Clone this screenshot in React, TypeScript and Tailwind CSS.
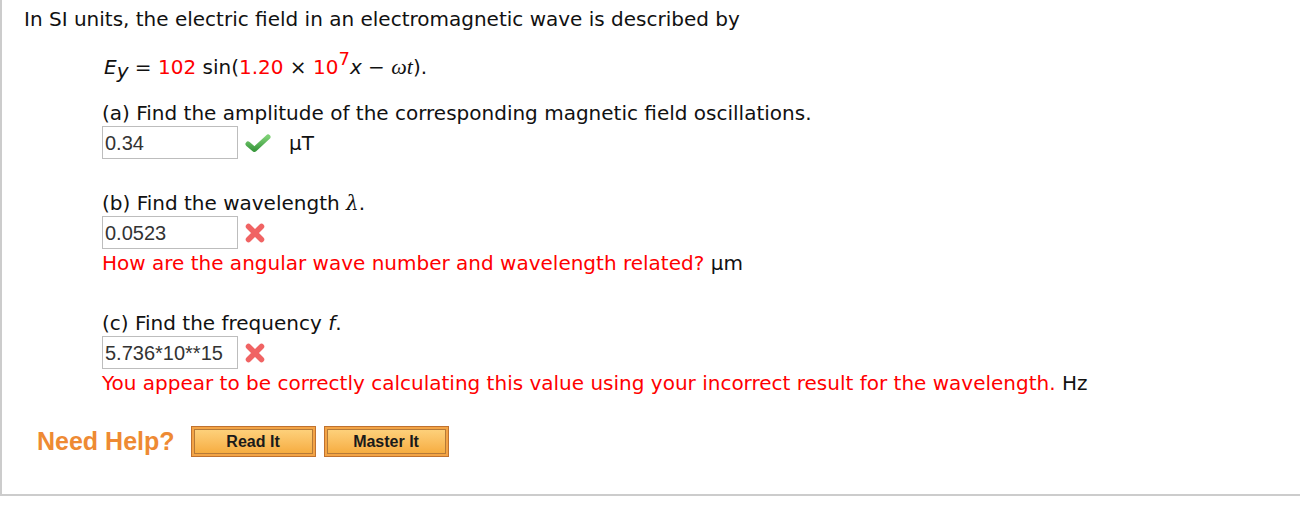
import React from 'react';

const Check = () => (
  <svg width="26" height="20" viewBox="0 0 26 20" className="shrink-0">
    <defs>
      <linearGradient id="chk" x1="0" y1="0" x2="0" y2="1">
        <stop offset="0" stopColor="#7ccf74" />
        <stop offset="1" stopColor="#3c9a3f" />
      </linearGradient>
    </defs>
    <path d="M3 11 L9.5 16.5 L23 4" fill="none" stroke="url(#chk)" strokeWidth="5" strokeLinecap="round" strokeLinejoin="round" />
  </svg>
);

const Cross = () => (
  <svg width="22" height="22" viewBox="0 0 22 22" className="shrink-0">
    <path d="M4.5 4.5 L17.5 17.5 M17.5 4.5 L4.5 17.5" fill="none" stroke="#f06363" strokeWidth="5.5" strokeLinecap="round" />
  </svg>
);

const Answer = ({ value }: { value: string }) => (
  <div className="w-[136px] h-[33px] border border-[#bdbdbd] bg-white flex items-center px-[2px] text-[20px] text-[#333] [font-family:'Liberation_Sans',Arial,sans-serif]">
    {value}
  </div>
);

const HelpButton = ({ label }: { label: string }) => (
  <button className="w-[125px] h-[31px] border border-[#c0722f] bg-[#f3a446] p-[2px] cursor-pointer">
    <span className="flex h-full items-center justify-center border border-[#b57a38] bg-gradient-to-b from-[#fdd07a] to-[#f6ad40] text-[16px] font-bold text-[#1a1a1a] [font-family:'Liberation_Sans',Arial,sans-serif]">
      {label}
    </span>
  </button>
);

export default function App() {
  return (
    <div className="w-[1300px] h-[508px] bg-white [font-family:'DejaVu_Sans',Verdana,sans-serif] text-[20px] text-[#111]">
      <div className="h-[496px] border-l-2 border-b-2 border-[#cccccc] pl-[22px] pt-[6px]">
        <p className="leading-[26px]">In SI units, the electric field in an electromagnetic wave is described by</p>

        <div className="pl-[78px]">
          <p className="leading-[26px] mt-[22px] pl-[2px]">
            <i>E</i><sub className="italic text-[20px] relative top-[4px]">y</sub>
            {' '}= <span className="text-[#ff0000]">102</span> sin(<span className="text-[#ff0000]">1.20</span> × <span className="text-[#ff0000]">10</span><sup className="text-[#ff0000] text-[18px]">7</sup><i>x</i> − <i className="[font-family:'Liberation_Serif',serif] text-[22px]">ωt</i>).
          </p>

          <p className="leading-[26px] mt-[20px]">(a) Find the amplitude of the corresponding magnetic field oscillations.</p>
          <div className="flex items-center">
            <Answer value="0.34" />
            <span className="ml-[7px]"><Check /></span>
            <span className="ml-[18px]">μT</span>
          </div>

          <p className="leading-[26px] mt-[31px]">(b) Find the wavelength <i className="[font-family:'DejaVu_Serif',serif]">λ</i>.</p>
          <div className="flex items-center">
            <Answer value="0.0523" />
            <span className="ml-[6px]"><Cross /></span>
          </div>
          <p className="leading-[28px]"><span className="text-[#ff0000]">How are the angular wave number and wavelength related?</span> μm</p>

          <p className="leading-[26px] mt-[33px]">(c) Find the frequency <i>f</i>.</p>
          <div className="flex items-center">
            <Answer value="5.736*10**15" />
            <span className="ml-[6px]"><Cross /></span>
          </div>
          <p className="leading-[28px]"><span className="text-[#ff0000]">You appear to be correctly calculating this value using your incorrect result for the wavelength.</span> Hz</p>
        </div>

        <div className="flex items-center mt-[29px] pl-[13px]">
          <span className="text-[25px] leading-[31px] font-bold text-[#ee8a33] [font-family:'Liberation_Sans',Arial,sans-serif] mr-[16px]">Need Help?</span>
          <HelpButton label="Read It" />
          <span className="ml-[8px] flex"><HelpButton label="Master It" /></span>
        </div>
      </div>
    </div>
  );
}
